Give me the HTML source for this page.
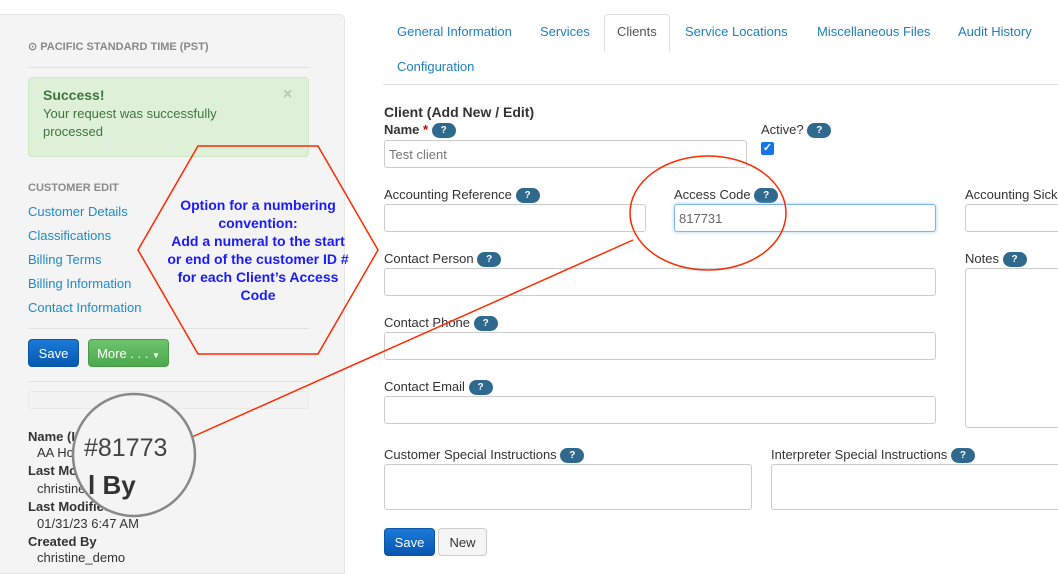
<!DOCTYPE html>
<html><head><style>
*{box-sizing:border-box;margin:0;padding:0}
body{width:1058px;height:559px;overflow:hidden;background:#fff;font-family:"Liberation Sans",sans-serif;font-size:13px;color:#333;position:relative}
.a{position:absolute;white-space:nowrap}
.side{position:absolute;left:0;top:14px;width:345px;height:560px;background:#f4f4f4;border:1px solid #e6e6e6;border-left:none;border-radius:0 5px 0 0}
.hr{position:absolute;left:28px;width:281px;height:1px;background:#e0e0e0}
.lnk{color:#1f8ac9}
.tab{color:#1f7fbf}
.inp{position:absolute;height:28px;border:1px solid #ccc;border-radius:3px;background:#fff}
.lab{position:absolute;white-space:nowrap;font-size:13px;color:#333}
.q{display:inline-block;width:24px;height:15px;border-radius:8px;background:#2f6a8e;color:#fff;font-size:10px;font-weight:bold;text-align:center;line-height:15px;vertical-align:1px}
.btn{position:absolute;height:28px;border-radius:4px;color:#fff;font-size:13px;text-align:center;line-height:27px}
</style></head><body>
<div class="side"></div>
<div class="a" style="left:28px;top:40px;font-size:11px;font-weight:bold;color:#888">⊙ PACIFIC STANDARD TIME (PST)</div>
<div class="hr" style="top:67px"></div>
<div class="a" style="left:28px;top:77px;width:281px;height:80px;background:#dff0d8;border:1px solid #d0e6c4;border-radius:4px"></div>
<div class="a" style="left:43px;top:87px;font-weight:bold;font-size:14px;color:#3c763d">Success!</div>
<div class="a" style="left:43px;top:105px;color:#3c763d;line-height:18px">Your request was successfully<br>processed</div>
<div class="a" style="left:283px;top:86px;color:#b5c9ad;font-size:16px;font-weight:bold">×</div>
<div class="a" style="left:28px;top:182px;font-size:11px;font-weight:bold;color:#8a8a8a">CUSTOMER EDIT</div>
<div class="a lnk" style="left:28px;top:204px">Customer Details</div>
<div class="a lnk" style="left:28px;top:228px">Classifications</div>
<div class="a lnk" style="left:28px;top:252px">Billing Terms</div>
<div class="a lnk" style="left:28px;top:276px">Billing Information</div>
<div class="a lnk" style="left:28px;top:300px">Contact Information</div>
<div class="hr" style="top:328px"></div>
<div class="btn" style="left:28px;top:339px;width:51px;background:linear-gradient(#1a7ad8,#0757b0);border:1px solid #0a55a5">Save</div>
<div class="btn" style="left:88px;top:339px;width:81px;background:linear-gradient(#6cc46c,#4ea84e);border:1px solid #479e47">More . . . <span style="font-size:8px">▼</span></div>
<div class="hr" style="top:381px"></div>
<div class="a" style="left:28px;top:391px;width:281px;height:18px;background:#f2f2f2;border:1px solid #e8e8e8;border-radius:3px"></div>
<div class="a" style="left:28px;top:429px;font-weight:bold">Name (ID)</div>
<div class="a" style="left:37px;top:445px">AA Ho</div>
<div class="a" style="left:28px;top:463px;font-weight:bold">Last Mo</div>
<div class="a" style="left:37px;top:481px">christine</div>
<div class="a" style="left:28px;top:499px;font-weight:bold">Last Modified</div>
<div class="a" style="left:37px;top:516px">01/31/23 6:47 AM</div>
<div class="a" style="left:28px;top:534px;font-weight:bold">Created By</div>
<div class="a" style="left:37px;top:550px">christine_demo</div>

<!-- tabs -->
<div class="a" style="left:604px;top:14px;width:66px;height:37px;border:1px solid #ddd;border-bottom:none;border-radius:4px 4px 0 0;background:#fff"></div>
<div class="a tab" style="left:397px;top:24px">General Information</div>
<div class="a tab" style="left:540px;top:24px">Services</div>
<div class="a" style="left:617px;top:24px;color:#555">Clients</div>
<div class="a tab" style="left:685px;top:24px">Service Locations</div>
<div class="a tab" style="left:817px;top:24px">Miscellaneous Files</div>
<div class="a tab" style="left:958px;top:24px">Audit History</div>
<div class="a tab" style="left:397px;top:59px">Configuration</div>
<div class="a" style="left:383px;top:84px;width:675px;height:1px;background:#ddd"></div>

<div class="a" style="left:384px;top:104px;font-weight:bold;font-size:14px">Client (Add New / Edit)</div>
<div class="lab" style="left:384px;top:122px;font-weight:bold">Name <span style="color:#c00">*</span> <span class="q">?</span></div>
<div class="inp" style="left:384px;top:140px;width:363px;padding:6px 4px;color:#777">Test client</div>
<div class="lab" style="left:761px;top:122px">Active? <span class="q">?</span></div>
<div class="a" style="left:761px;top:142px;width:13px;height:13px;background:#1474e8;border-radius:2px;color:#fff;font-size:11px;line-height:13px;text-align:center;font-weight:bold">✓</div>

<div class="lab" style="left:384px;top:187px">Accounting Reference <span class="q">?</span></div>
<div class="inp" style="left:384px;top:204px;width:262px"></div>
<div class="lab" style="left:674px;top:187px">Access Code <span class="q">?</span></div>
<div class="inp" style="left:674px;top:204px;width:262px;border-color:#7fb4ea;box-shadow:0 0 4px #a8cff3;padding:6px 4px;color:#666">817731</div>
<div class="lab" style="left:965px;top:187px">Accounting Sick</div>
<div class="inp" style="left:965px;top:204px;width:120px"></div>

<div class="lab" style="left:384px;top:251px">Contact Person <span class="q">?</span></div>
<div class="inp" style="left:384px;top:268px;width:552px"></div>
<div class="lab" style="left:965px;top:251px">Notes <span class="q">?</span></div>
<div class="inp" style="left:965px;top:268px;width:120px;height:160px"></div>
<div class="lab" style="left:384px;top:315px">Contact Phone <span class="q">?</span></div>
<div class="inp" style="left:384px;top:332px;width:552px"></div>
<div class="lab" style="left:384px;top:379px">Contact Email <span class="q">?</span></div>
<div class="inp" style="left:384px;top:396px;width:552px"></div>

<div class="lab" style="left:384px;top:447px">Customer Special Instructions <span class="q">?</span></div>
<div class="inp" style="left:384px;top:464px;width:368px;height:46px"></div>
<div class="lab" style="left:771px;top:447px">Interpreter Special Instructions <span class="q">?</span></div>
<div class="inp" style="left:771px;top:464px;width:300px;height:46px"></div>

<div class="btn" style="left:384px;top:528px;width:51px;background:linear-gradient(#1a7ad8,#0757b0);border:1px solid #0a55a5">Save</div>
<div class="btn" style="left:438px;top:528px;width:49px;background:#f5f5f5;border:1px solid #ccc;color:#333">New</div>

<svg class="a" style="left:0;top:0" width="1058" height="559">
<line x1="192" y1="437" x2="633" y2="240" stroke="#ff2a00" stroke-width="1.5"/>
<polygon points="198,146 318,146 378,250 318,354 198,354 138,250" fill="none" stroke="#ff2a00" stroke-width="1.5"/>
<ellipse cx="708" cy="213" rx="78" ry="57" fill="none" stroke="#ff2a00" stroke-width="1.5"/>
<circle cx="134" cy="455" r="61" fill="#f4f4f4" stroke="#888" stroke-width="2.5"/>
</svg>
<div class="a" style="left:84px;top:434px;font-size:25px;color:#444">#81773</div>
<div class="a" style="left:88px;top:470px;font-size:26px;font-weight:bold;color:#333">l By</div>
<div class="a" style="left:148px;top:196px;width:220px;text-align:center;color:#1a1aff;font-weight:bold;font-size:14px;line-height:18px">Option for a numbering<br>convention:<br>Add a numeral to the start<br>or end of the customer ID #<br>for each Client’s Access<br>Code</div>
</body></html>
